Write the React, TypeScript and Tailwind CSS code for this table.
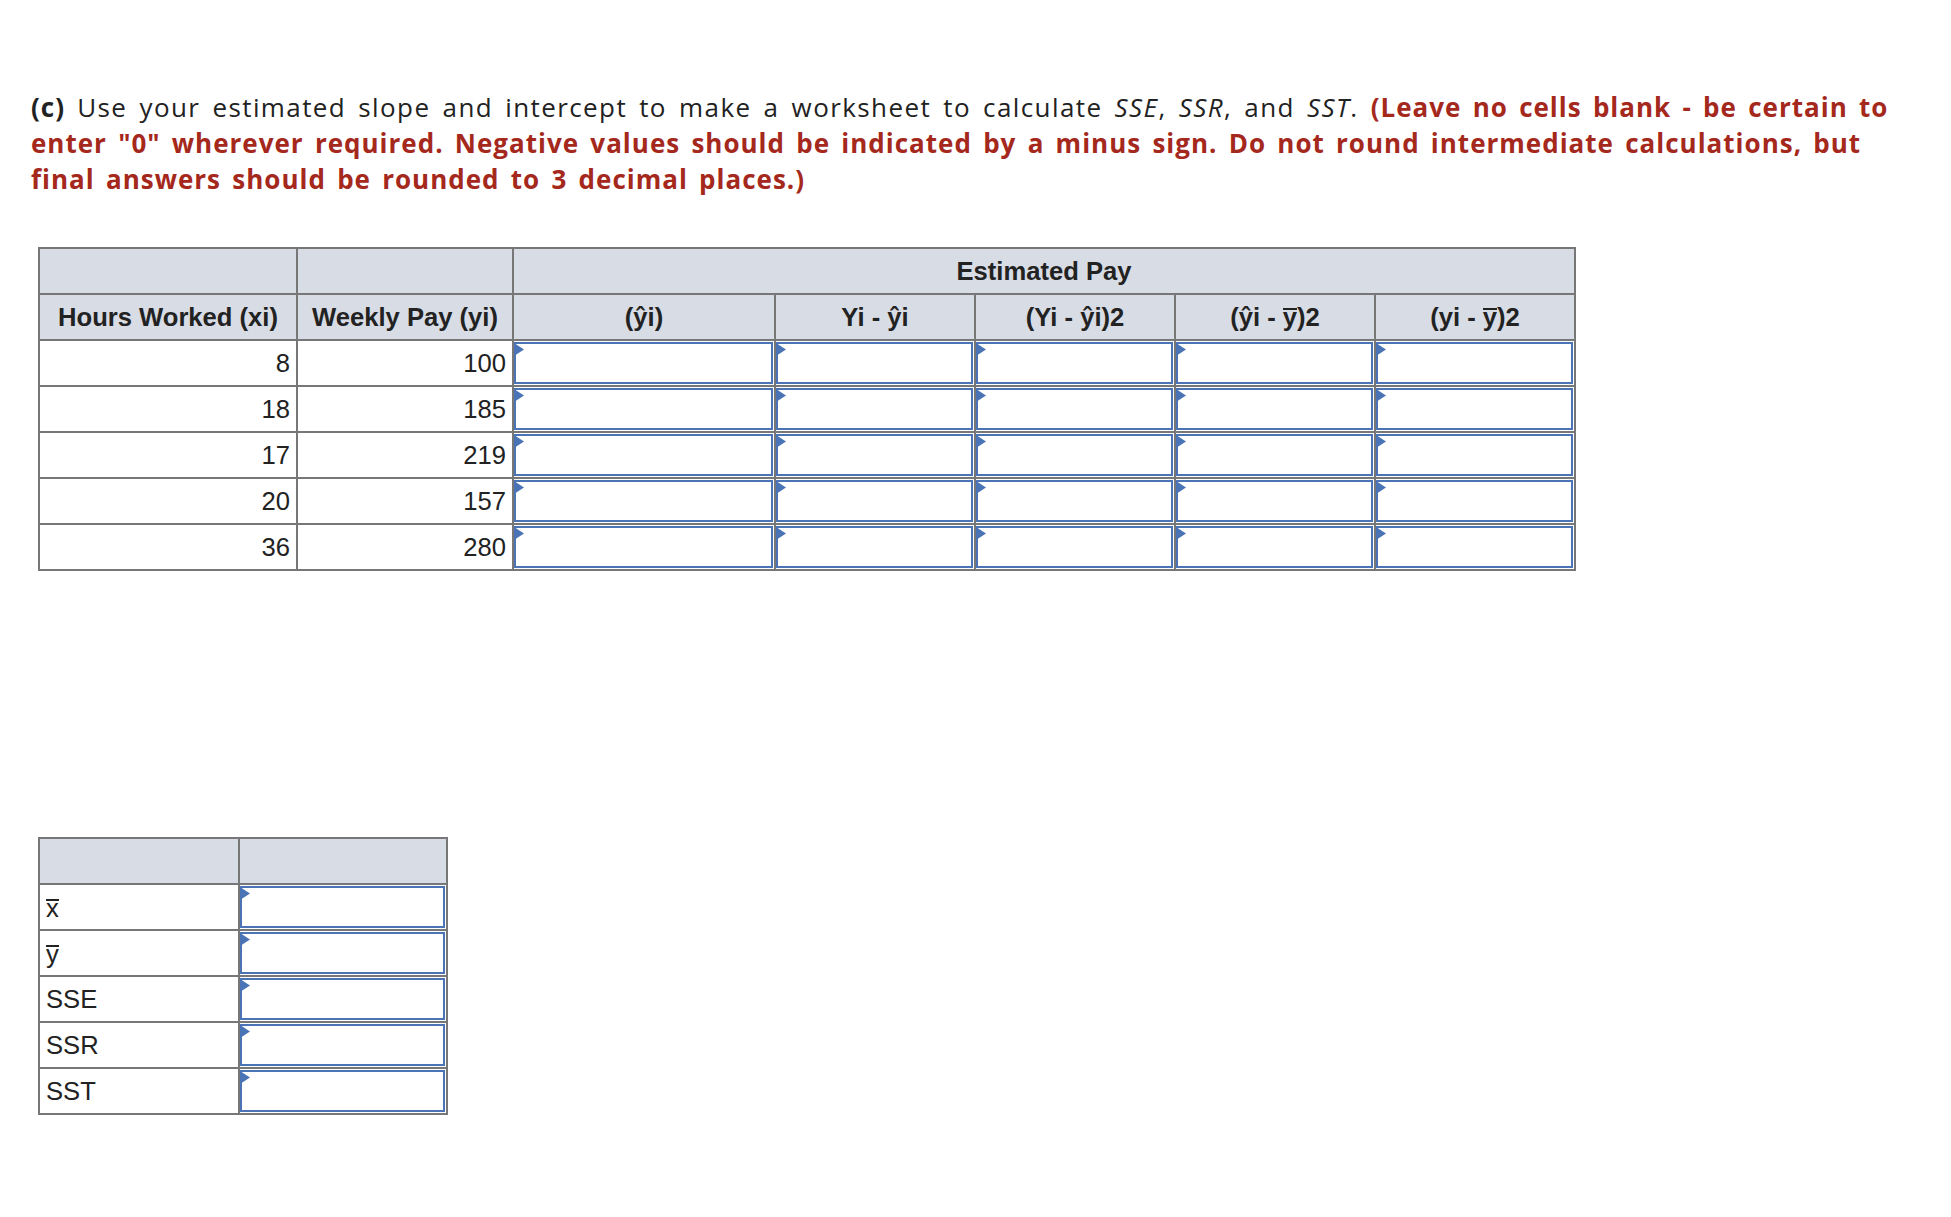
import React from "react"

const GRAY = "border-[#777777]"

const xs = [8, 18, 17, 20, 36]
const ys = [100, 185, 219, 157, 280]

// letter with a bar drawn just above it (x̄, ȳ)
function Bar({ children }: { children: React.ReactNode }) {
  return <span className="inline-block border-t-2 border-current leading-[15px]">{children}</span>
}

function InputCell() {
  return (
    <div className={`h-[46px] border-r-2 border-b-2 ${GRAY} py-px pr-px`}>
      <div className="relative h-full border-2 border-[#4a74b6] bg-white">
        <svg className="absolute -left-[2px] -top-[1px]" width="10" height="13" viewBox="0 0 10 13">
          <polygon points="0,0 10,6.5 0,13" fill="#4a74b6" />
        </svg>
      </div>
    </div>
  )
}

function HeadCell({ children, className = "" }: { children?: React.ReactNode; className?: string }) {
  return (
    <div
      className={`flex h-[46px] items-center justify-center border-r-2 border-b-2 ${GRAY} bg-[#d8dce5] font-bold ${className}`}
    >
      {children}
    </div>
  )
}

function NumCell({ children }: { children: React.ReactNode }) {
  return (
    <div className={`flex h-[46px] items-center justify-end border-r-2 border-b-2 ${GRAY} bg-white pr-[6px]`}>
      {children}
    </div>
  )
}

export default function App() {
  return (
    <div className="min-h-[1217px] bg-white pt-[89px] pl-[31px] text-[#222222]">
      <p className="text-[26px] leading-[36px] font-['Open_Sans','Lato',sans-serif] whitespace-nowrap tracking-[1.4px] [word-spacing:4px]">
        <b className="tracking-[1px]">(c)</b> Use your estimated slope and intercept to make a worksheet to
        calculate <i>SSE</i>, <i>SSR</i>, and <i>SST</i>.{" "}
        <b className="text-[#a5281d] tracking-[1px] [word-spacing:3.5px]">
          (Leave no cells blank - be certain to
          <br />
          enter "0" wherever required. Negative values should be indicated by a minus sign. Do not round
          intermediate calculations, but
          <br />
          final answers should be rounded to 3 decimal places.)
        </b>
      </p>

      {/* worksheet */}
      <div
        className={`ml-[7px] mt-[50px] grid w-max grid-cols-[258px_216px_262px_200px_200px_200px_200px] border-t-2 border-l-2 ${GRAY} text-[25.6px] font-['Liberation_Sans',Arial,sans-serif]`}
      >
        <HeadCell />
        <HeadCell />
        <HeadCell className="col-span-5">Estimated Pay</HeadCell>

        <HeadCell>Hours Worked (xi)</HeadCell>
        <HeadCell>Weekly Pay (yi)</HeadCell>
        <HeadCell>(ŷi)</HeadCell>
        <HeadCell>Yi - ŷi</HeadCell>
        <HeadCell>(Yi - ŷi)2</HeadCell>
        <HeadCell>
          <span>
            (ŷi - <Bar>y</Bar>)2
          </span>
        </HeadCell>
        <HeadCell>
          <span>
            (yi - <Bar>y</Bar>)2
          </span>
        </HeadCell>

        {xs.map((x, r) => (
          <React.Fragment key={r}>
            <NumCell>{x}</NumCell>
            <NumCell>{ys[r]}</NumCell>
            <InputCell />
            <InputCell />
            <InputCell />
            <InputCell />
            <InputCell />
          </React.Fragment>
        ))}
      </div>

      {/* summary */}
      <div
        className={`ml-[7px] mt-[266px] grid w-max grid-cols-[200px_208px] border-t-2 border-l-2 ${GRAY} text-[25.6px] font-['Liberation_Sans',Arial,sans-serif]`}
      >
        <HeadCell />
        <HeadCell />
        {[<Bar key="x">x</Bar>, <Bar key="y">y</Bar>, "SSE", "SSR", "SST"].map((label, i) => (
          <React.Fragment key={i}>
            <div className={`flex h-[46px] items-center border-r-2 border-b-2 ${GRAY} pl-[6px]`}>{label}</div>
            <InputCell />
          </React.Fragment>
        ))}
      </div>
    </div>
  )
}
